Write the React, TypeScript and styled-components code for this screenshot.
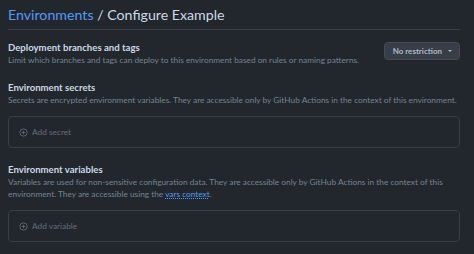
import React from 'react'
import styled, { createGlobalStyle } from 'styled-components'

const GlobalStyle = createGlobalStyle`
  html, body {
    margin: 0;
    background: #22272e;
  }
  body {
    font-family: Lato, 'Liberation Sans', sans-serif;
    color: #adbac7;
  }
`

const Page = styled.div`
  padding: 0 14px 0 8px;
  width: 474px;
  height: 254px;
  box-sizing: border-box;
  overflow: hidden;
`

const Header = styled.h1`
  margin: 0;
  padding: 5px 0 5px;
  font-size: 14.2px;
  font-weight: 400;
  line-height: 19px;
  color: #cdd9e5;
  border-bottom: 1px solid #373e47;
`

const Crumb = styled.a`
  color: #539bf5;
  text-decoration: none;
`

const Section = styled.section<{ $top: number }>`
  margin-top: ${({ $top }) => $top}px;
`

const SectionRow = styled.div`
  display: flex;
  align-items: flex-start;
  justify-content: space-between;
`

const Title = styled.h2`
  margin: 0;
  font-size: 9.6px;
  font-weight: 700;
  line-height: 13px;
  color: #cdd9e5;
`

const Note = styled.p`
  margin: 0;
  font-size: 8.3px;
  line-height: 12px;
  color: #768390;
`

const Link = styled.a`
  color: #539bf5;
  text-decoration: underline dotted;
`

const Select = styled.button`
  display: flex;
  align-items: center;
  gap: 6px;
  margin-top: 1px;
  height: 18px;
  padding: 0 7px 0 8px;
  background: #373e47;
  border: 1px solid #444c56;
  border-radius: 4px;
  color: #adbac7;
  font-family: inherit;
  font-size: 8px;
  font-weight: 700;
  white-space: nowrap;
  cursor: pointer;
`

const Caret = styled.span`
  width: 0;
  height: 0;
  border-left: 2px solid transparent;
  border-right: 2px solid transparent;
  border-top: 2px solid #adbac7;
`

const AddBox = styled.div`
  display: flex;
  align-items: center;
  gap: 4px;
  margin-top: 10px;
  height: 32px;
  padding: 0 10px;
  box-sizing: border-box;
  border: 1px solid #373e47;
  border-radius: 4px;
  color: #636e7b;
  font-size: 8.3px;
`

const PlusCircle = () => (
  <svg width="9" height="9" viewBox="0 0 16 16" fill="none" stroke="#636e7b" strokeWidth="1.5">
    <circle cx="8" cy="8" r="6.5" />
    <path d="M8 5v6M5 8h6" />
  </svg>
)

export default function App() {
  return (
    <Page>
      <GlobalStyle />
      <Header>
        <Crumb href="#">Environments</Crumb> / Configure Example
      </Header>

      <Section $top={11}>
        <SectionRow>
          <div>
            <Title>Deployment branches and tags</Title>
            <Note>Limit which branches and tags can deploy to this environment based on rules or naming patterns.</Note>
          </div>
          <Select>
            No restriction
            <Caret />
          </Select>
        </SectionRow>
      </Section>

      <Section $top={15}>
        <Title>Environment secrets</Title>
        <Note>Secrets are encrypted environment variables. They are accessible only by GitHub Actions in the context of this environment.</Note>
        <AddBox>
          <PlusCircle />
          Add secret
        </AddBox>
      </Section>

      <Section $top={15}>
        <Title>Environment variables</Title>
        <Note>
          Variables are used for non-sensitive configuration data. They are accessible only by GitHub Actions in the context of this
          environment. They are accessible using the <Link href="#">vars context</Link>.
        </Note>
        <AddBox>
          <PlusCircle />
          Add variable
        </AddBox>
      </Section>
    </Page>
  )
}
